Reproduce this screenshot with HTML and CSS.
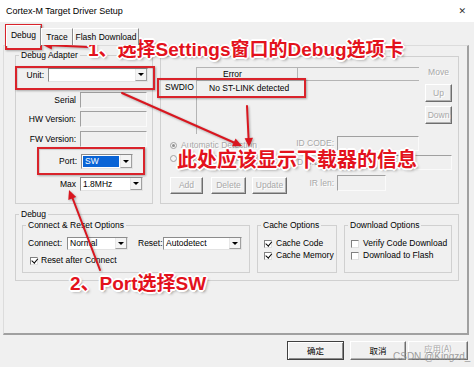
FILE: index.html
```html
<!DOCTYPE html>
<html>
<head>
<meta charset="utf-8">
<link rel="stylesheet" href="styles.css">
</head>
<body>
<div class="window">
  <div class="titlebar"><span class="title">Cortex-M Target Driver Setup</span><span class="close">✕</span></div>
  <div class="client">
    <div class="tabs">
      <div class="tab active t-debug">Debug</div>
      <div class="tab t-trace">Trace</div>
      <div class="tab t-flash">Flash Download</div>
    </div>
    <div class="panel">
      <div class="toprow">
        <fieldset class="grp adapter">
          <legend>Debug Adapter</legend>
          <div class="row r-unit"><span class="lbl w-unit">Unit:</span><div class="combo c-unit"><span class="val"></span><span class="arrow"></span></div></div>
          <div class="row r-serial"><span class="lbl w-std">Serial</span><div class="field f-std"></div></div>
          <div class="row r-hw"><span class="lbl w-std">HW Version:</span><div class="field f-std"></div></div>
          <div class="row r-fw"><span class="lbl w-std">FW Version:</span><div class="field f-std"></div></div>
          <div class="row r-port"><span class="lbl w-port">Port:</span><div class="combo c-port"><span class="val"><span class="sel">SW</span></span><span class="arrow"></span></div></div>
          <div class="row r-max"><span class="lbl w-std">Max</span><div class="combo c-max"><span class="val">1.8MHz</span><span class="arrow"></span></div></div>
        </fieldset>
        <fieldset class="grp device">
          <div class="devtop">
            <div class="devlist">
              <div class="rowhdr">SWDIO</div>
              <div class="list">
                <div class="lhead"><span class="hc1">Error</span><span class="hc2"></span></div>
                <div class="lrow">No ST-LINK detected</div>
              </div>
            </div>
            <div class="movecol">
              <div class="movelbl dis">Move</div>
              <div class="btn dbtn b-up">Up</div>
              <div class="btn dbtn b-down">Down</div>
            </div>
          </div>
          <div class="devbot">
            <div class="detect">
              <div class="radrow dis"><span class="radio on"></span>Automatic Detection</div>
              <div class="radrow dis"><span class="radio"></span>Manual Configuration</div>
              <div class="btnrow">
                <div class="btn dbtn b-add">Add</div>
                <div class="btn dbtn b-del">Delete</div>
                <div class="btn dbtn b-upd">Update</div>
              </div>
            </div>
            <div class="idcol">
              <div class="row r-id"><span class="lbl dis w-id">ID CODE:</span><div class="field f-id"></div></div>
              <div class="row r-dn"><span class="dis l-dn">Device Name:</span><div class="field f-dn"></div></div>
              <div class="row r-ir"><span class="lbl dis w-id">IR len:</span><div class="field f-ir"></div></div>
            </div>
          </div>
        </fieldset>
      </div>
      <fieldset class="grp debug">
        <legend>Debug</legend>
        <div class="debuginner">
          <fieldset class="grp sub cro">
            <legend>Connect &amp; Reset Options</legend>
            <div class="row r-conn">
              <span class="l-conn">Connect:</span><div class="combo c-conn"><span class="val">Normal</span><span class="arrow"></span></div>
              <span class="l-reset">Reset:</span><div class="combo c-reset"><span class="val">Autodetect</span><span class="arrow"></span></div>
            </div>
            <div class="chkrow r-rac"><span class="chk on"></span>Reset after Connect</div>
          </fieldset>
          <fieldset class="grp sub cache">
            <legend>Cache Options</legend>
            <div class="chkrow first"><span class="chk on"></span>Cache Code</div>
            <div class="chkrow"><span class="chk on"></span>Cache Memory</div>
          </fieldset>
          <fieldset class="grp sub dl">
            <legend>Download Options</legend>
            <div class="chkrow first"><span class="chk"></span>Verify Code Download</div>
            <div class="chkrow"><span class="chk"></span>Download to Flash</div>
          </fieldset>
        </div>
      </fieldset>
    </div>
    <div class="buttons">
      <div class="btn okbtn">确定</div>
      <div class="btn cbtn">取消</div>
      <div class="btn abtn dis">应用(A)</div>
    </div>
  </div>
</div>

<div class="redbox rb-tab"></div>
<div class="redbox rb-unit"></div>
<div class="redbox rb-swdio"></div>
<div class="redbox rb-port"></div>

<svg class="arrows" width="474" height="367" viewBox="0 0 474 367">
  <g stroke="#d9161f" stroke-width="2" fill="none" stroke-linecap="round">
    <line x1="88" y1="47" x2="50" y2="45.3"/>
    <line x1="122" y1="93" x2="235" y2="143"/>
    <line x1="247" y1="106" x2="248.6" y2="139"/>
    <line x1="100" y1="270" x2="72.5" y2="198"/>
  </g>
  <g fill="#d9161f">
    <polygon points="43,45 52.2,41.2 51.8,49.6"/>
    <polygon points="242,146 232,146.3 235.6,138.4"/>
    <polygon points="249,147 253,137.8 244.6,138.2"/>
    <polygon points="69,190 76.2,196.9 68.3,199.9"/>
  </g>
</svg>

<div class="anno a1">1、选择Settings窗口的Debug选项卡</div>
<div class="anno a2">此处应该显示下载器的信息</div>
<div class="anno a3">2、Port选择SW</div>
<div class="wm">CSDN @Kingzd_</div>
</body>
</html>
```

FILE: styles.css
```css
* { box-sizing: border-box; }

body {
  margin: 0;
  width: 474px;
  height: 367px;
  overflow: hidden;
  position: relative;
  background: #fff;
  color: #000;
  font: 8.5px/11px "Liberation Sans", "Noto Sans CJK SC", sans-serif;
}

.window { width: 474px; height: 367px; }

.titlebar {
  height: 22px;
  background: #fff;
  display: flex;
  align-items: center;
  justify-content: space-between;
  padding: 0 8px 0 6px;
  font-size: 9px;
}
.close { font-family: "DejaVu Sans", sans-serif; font-size: 9px; color: #333; }

.client {
  height: 345px;
  background: #f0f0f0;
  padding: 3px 6px 0 3px;
  display: flex;
  flex-direction: column;
}

/* tabs */
.tabs {
  display: flex;
  align-items: flex-end;
  height: 20px;
  margin-left: 3px;
  position: relative;
  z-index: 1;
}
.tab {
  height: 17px;
  display: flex;
  align-items: center;
  justify-content: center;
  border-top: 1px solid #fff;
  border-left: 1px solid #fff;
  border-right: 1px solid #8a8a8a;
  background: #f0f0f0;
}
.tab.active { height: 21px; margin-bottom: -1px; padding-bottom: 2px; }
.t-debug { width: 35px; }
.t-trace { width: 32px; }
.t-flash { width: 66px; }

.panel {
  width: 466px;
  height: 290px;
  border-style: solid;
  border-width: 1px 2px 2px 1px;
  border-color: #dcdcdc #a0a0a0 #a0a0a0 #dcdcdc;
  padding: 4px 0 0 11px;
}

.toprow { display: flex; align-items: flex-start; }

.grp {
  margin: 0;
  padding: 0;
  min-width: 0;
  border: 1px solid #d0d0d0;
}
legend { padding: 0 2px; margin-left: 3px; line-height: 11px; }

.adapter { width: 138px; height: 154px; }
.device { width: 299px; height: 148px; margin: 6px 0 0 7px; }

.row { display: flex; align-items: center; }
.lbl { text-align: right; flex: none; white-space: nowrap; }
.w-unit { width: 28px; margin-right: 4px; }
.w-std { width: 60px; margin-right: 4px; }
.w-port { width: 61px; margin-right: 4px; }

.r-unit { margin-top: 7px; height: 14px; }
.r-serial { margin-top: 10px; height: 16px; }
.r-hw { margin-top: 3px; height: 16px; }
.r-fw { margin-top: 4px; height: 16px; }
.r-port { margin-top: 7px; height: 15px; }
.r-max { margin-top: 8px; height: 14px; }

.field {
  height: 100%;
  border: 1px solid;
  border-color: #a0a0a0 #fafafa #fafafa #a0a0a0;
  background: #f0f0f0;
}
.f-std { width: 67px; }

.combo {
  height: 100%;
  display: flex;
  background: #fff;
  border: 1px solid;
  border-color: #8c8c8c #e3e3e3 #e3e3e3 #8c8c8c;
}
.combo .val { flex: 1; padding: 0 2px; display: flex; align-items: center; white-space: nowrap; overflow: hidden; }
.combo .arrow {
  width: 12px;
  display: flex;
  align-items: center;
  justify-content: center;
  background: #f4f4f4;
  border-left: 1px solid #e8e8e8;
  border-right: 1px solid #a0a0a0;
  border-bottom: 1px solid #a0a0a0;
}
.combo .arrow::after {
  content: "";
  border-top: 3px solid #000;
  border-left: 3px solid transparent;
  border-right: 3px solid transparent;
}
.c-unit { width: 100px; }
.c-port { width: 52px; }
.c-port .val { padding: 1px; }
.sel { background: #0a64d6; color: #fff; height: 100%; flex: 1; padding-left: 2px; display: flex; align-items: center; }
.c-max { width: 63px; }

/* device group */
.devtop { display: flex; margin-top: 10px; height: 67px; }
.devlist { width: 258px; display: flex; }
.rowhdr { width: 35px; padding: 15px 0 0 4px; }
.list { flex: 1; border-top: 1px solid #b4b4b4; border-left: 1px solid #b4b4b4; }
.lhead { height: 13px; border-bottom: 1px solid #b4b4b4; display: flex; }
.hc1 { width: 101px; border-right: 1px solid #b4b4b4; padding-left: 26px; line-height: 12px; }
.lrow { margin-top: 2px; padding-left: 12px; }
.movecol { margin-left: 6px; width: 27px; display: flex; flex-direction: column; }
.movelbl { text-align: center; line-height: 11px; }

.dis { color: #a8a8a8; text-shadow: 1px 1px 0 #fff; }

.btn {
  display: flex;
  align-items: center;
  justify-content: center;
  border: 1px solid;
  border-color: #fff #6e6e6e #6e6e6e #fff;
  box-shadow: inset -1px -1px 0 #b0b0b0;
  background: #f0f0f0;
}
.dbtn { color: #a8a8a8; text-shadow: 1px 1px 0 #fff; }
.b-up { height: 18px; margin-top: 6px; }
.b-down { height: 18px; margin-top: 4px; }

.devbot { display: flex; }
.detect { margin-left: 9px; width: 120px; }
.radrow { display: flex; align-items: center; height: 13px; white-space: nowrap; }
.radrow:first-child { margin-top: 5px; }
.radio {
  width: 7px; height: 7px; border-radius: 50%; flex: none;
  border: 1px solid #a0a0a0; background: #f4f4f4;
  margin-right: 4px; display: flex; align-items: center; justify-content: center;
}
.radio.on::after { content: ""; width: 3px; height: 3px; border-radius: 50%; background: #909090; }
.btnrow { display: flex; margin-top: 12px; height: 17px; }
.b-add { width: 33px; }
.b-del { width: 35px; margin-left: 8px; }
.b-upd { width: 35px; margin-left: 6px; }

.idcol { margin-left: 4px; width: 158px; }
.w-id { width: 40px; margin-right: 3px; }
.r-id { margin-top: 2px; height: 15px; }
.f-id { width: 82px; }
.r-dn { margin-top: 4px; height: 15px; }
.l-dn { width: 53px; flex: none; white-space: nowrap; padding-left: 3px; }
.f-dn { flex: 1; }
.r-ir { margin-top: 5px; height: 16px; }
.f-ir { width: 49px; }

/* debug group */
.debug { width: 444px; height: 72px; margin-top: 5px; }
.debuginner { display: flex; gap: 7px; padding-left: 6px; }
.sub { height: 53px; }
.cro { width: 228px; }
.cache { width: 80px; }
.dl { width: 108px; }

.r-conn { margin-top: 6px; height: 13px; padding-left: 5px; }
.l-conn { width: 38px; flex: none; }
.c-conn { width: 61px; margin-left: 1px; }
.l-reset { width: 24px; margin-left: 10px; flex: none; }
.c-reset { width: 79px; margin-left: 1px; }

.chkrow { display: flex; align-items: center; height: 11px; padding-left: 6px; white-space: nowrap; }
.chkrow.first { margin-top: 7px; }
.chkrow + .chkrow { margin-top: 1px; }
.r-rac { margin-top: 5px; padding-left: 7px; }
.chk {
  width: 8px; height: 8px; flex: none;
  border: 1px solid; border-color: #808080 #e0e0e0 #e0e0e0 #808080;
  background: #fff; margin-right: 4px; position: relative;
}
.r-rac .chk { margin-right: 3px; }
.chk.on::after {
  content: "";
  position: absolute;
  left: 1.5px; top: -0.5px;
  width: 2.5px; height: 4.5px;
  border-right: 1.5px solid #000;
  border-bottom: 1.5px solid #000;
  transform: rotate(40deg);
}

/* bottom buttons */
.buttons { display: flex; justify-content: flex-end; margin-top: 6px; height: 19px; }
.buttons .btn { font-family: "Noto Sans CJK SC", sans-serif; font-size: 8.5px; }
.okbtn { width: 57px; border-color: #404040; box-shadow: inset 1px 1px 0 #fff, inset -1px -1px 0 #8a8a8a; }
.cbtn { width: 56px; margin-left: 6px; }
.abtn { width: 60px; margin-left: 2px; padding-bottom: 4px; }

/* overlays */
.redbox {
  position: absolute;
  border: 2px solid #d9232b;
  box-shadow: 1px 1px 2px rgba(0,0,0,.3), inset 1px 1px 1px rgba(0,0,0,.15);
}
.rb-tab { left: 5px; top: 24px; width: 37px; height: 26px; }
.rb-unit { left: 15px; top: 66px; width: 140px; height: 24px; }
.rb-swdio { left: 157px; top: 78px; width: 149px; height: 20px; }
.rb-port { left: 37px; top: 147px; width: 108px; height: 28px; }

.arrows { position: absolute; left: 0; top: 0; filter: drop-shadow(1px 1px 1px rgba(0,0,0,.3)); }

.anno {
  position: absolute;
  color: #e3121c;
  font-family: "Liberation Sans", "Noto Sans CJK SC", sans-serif;
  font-weight: 700;
  line-height: 1;
  white-space: nowrap;
  text-shadow:
    -1px -1px 0 #fff, 1px -1px 0 #fff, -1px 1px 0 #fff, 1px 1px 0 #fff,
    0 -2px 0 #fff, 0 2px 0 #fff, -2px 0 0 #fff, 2px 0 0 #fff,
    2px 2px 3px rgba(0,0,0,.45);
}
.a1 { left: 88px; top: 40px; font-size: 19px; }
.a2 { left: 177px; top: 150px; font-size: 20px; }
.a3 { left: 70px; top: 274px; font-size: 19px; }

.wm {
  position: absolute;
  left: 393px;
  top: 351px;
  font: 10px/12px "Liberation Sans", sans-serif;
  color: rgba(140,140,140,.85);
}
```
